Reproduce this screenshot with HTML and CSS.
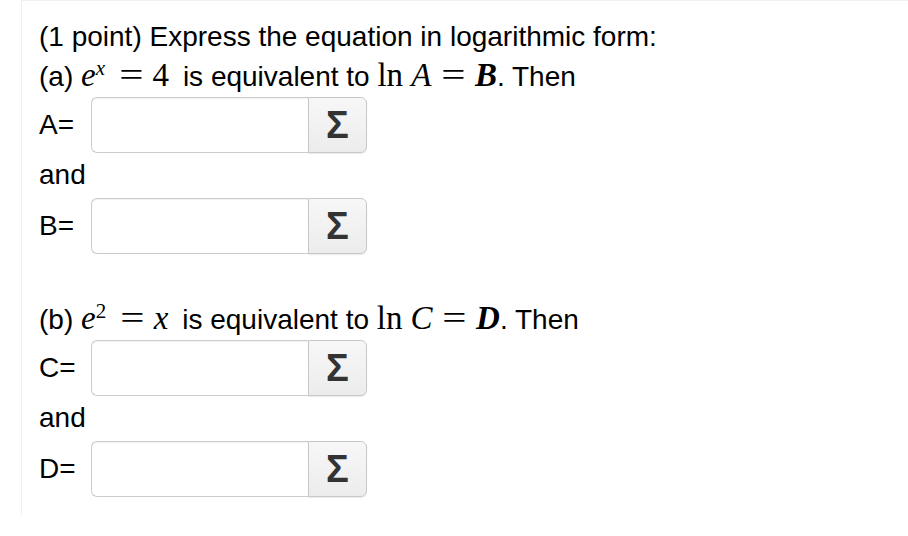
FILE: index.html
```html
<!DOCTYPE html>
<html>
<head>
<meta charset="utf-8">
<link rel="stylesheet" href="styles.css">
</head>
<body>
<div class="problem">
  <div class="line">(1 point) Express the equation in logarithmic form:</div>
  <div class="line">(a) <span class="math first"><i>e</i><sup><i>x</i></sup><span class="op">=</span>4</span> is equivalent to <span class="math"><span class="fn">ln</span><i>A</i><span class="op">=</span><i class="v">B</i></span>. Then</div>
  <div class="row"><span class="label">A=</span><span class="field"><span class="input"></span><span class="btn">&Sigma;</span></span></div>
  <div class="and">and</div>
  <div class="row"><span class="label">B=</span><span class="field"><span class="input"></span><span class="btn">&Sigma;</span></span></div>
  <div class="line partb">(b) <span class="math first"><i>e</i><sup>2</sup><span class="op">=</span><i>x</i></span> is equivalent to <span class="math"><span class="fn">ln</span><i>C</i><span class="op">=</span><i class="v">D</i></span>. Then</div>
  <div class="row"><span class="label">C=</span><span class="field"><span class="input"></span><span class="btn">&Sigma;</span></span></div>
  <div class="and">and</div>
  <div class="row"><span class="label">D=</span><span class="field"><span class="input"></span><span class="btn">&Sigma;</span></span></div>
</div>
</body>
</html>
```

FILE: styles.css
```css
html, body {
  margin: 0;
  padding: 0;
  background: #fff;
}
body {
  width: 908px;
  height: 536px;
  overflow: hidden;
  font-family: "Liberation Sans", Arial, sans-serif;
  font-size: 28px;
  color: #000;
}
.problem {
  margin-left: 21px;
  border-left: 1px solid #f0f0f0;
  border-top: 1px solid #f0f0f0;
  padding: 16px 0 20px 17px;
  height: 478px;
  display: flex;
  flex-direction: column;
}
.line {
  line-height: 39px;
  height: 39px;
  white-space: nowrap;
}
.math {
  font-family: "Liberation Serif", "Times New Roman", serif;
  font-size: 33px;
}
.math.first {
  margin-right: 6px;
}
.math sup {
  font-size: 21px;
  vertical-align: 11px;
  line-height: 0;
  margin-right: 4px;
}
.fn {
  margin-right: 8px;
}
.op {
  display: inline-block;
  transform: scaleX(1.3);
  margin: 0 12px 0 13px;
}
.v {
  font-weight: bold;
}
.row {
  display: flex;
  align-items: center;
  margin-top: 2px;
  height: 57px;
}
.label {
  width: 52px;
}
.field {
  display: flex;
  height: 56px;
}
.input {
  width: 216px;
  border: 1px solid #cccccc;
  border-right: none;
  border-radius: 6px 0 0 6px;
  box-shadow: inset 0 1px 1px rgba(0,0,0,0.06);
}
.btn {
  width: 57px;
  border: 1px solid #c8c8c8;
  border-radius: 0 6px 6px 0;
  background: linear-gradient(#f7f7f7, #ececec);
  display: flex;
  align-items: center;
  justify-content: center;
  font-family: "Liberation Sans", Arial, sans-serif;
  font-weight: bold;
  font-size: 38px;
  line-height: 1;
  color: #333;
  box-shadow: 0 1px 1px rgba(0,0,0,0.08);
}
.and {
  line-height: 43px;
  height: 43px;
}
.partb {
  margin-top: 45px;
}
```
